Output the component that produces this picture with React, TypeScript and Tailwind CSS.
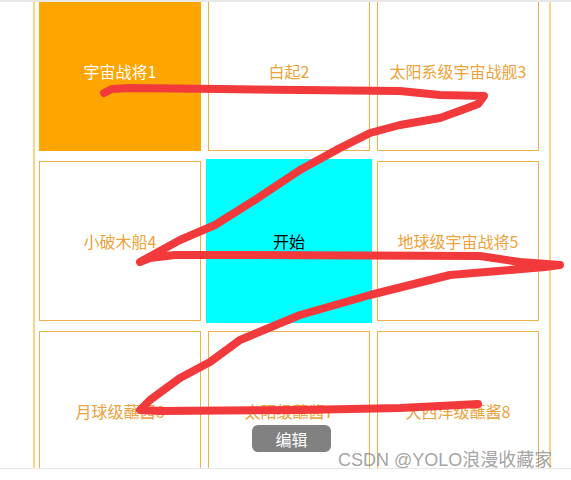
const cells = [
  { label: '宇宙战将1', kind: 'active' },
  { label: '白起2', kind: 'normal' },
  { label: '太阳系级宇宙战舰3', kind: 'normal' },
  { label: '小破木船4', kind: 'normal' },
  { label: '开始', kind: 'start' },
  { label: '地球级宇宙战将5', kind: 'normal' },
  { label: '月球级蘸酱6', kind: 'normal' },
  { label: '太阳级蘸酱7', kind: 'normal' },
  { label: '大西洋级蘸酱8', kind: 'normal' },
]

const stroke =
  '104,93 112,89 130,88 220,89 300,90 400,91 440,95 484,96 478,104 462,110 440,118 400,125 370,133 340,148 300,170 255,200 215,225 180,240 140,262 150,258 175,255 250,255 480,256 520,262 560,265 545,267 450,275 370,295 300,315 240,340 210,362 180,378 150,400 140,410 160,411 300,410 400,408 440,406 478,404'

function Cell({ label, kind }: { label: string; kind: string }) {
  if (kind === 'active') {
    return <div className="h-[160px] flex items-center justify-center bg-[#ffa500] text-white">{label}</div>
  }
  if (kind === 'start') {
    return <div className="h-[164px] -m-[2px] flex items-center justify-center bg-[#00ffff] text-black">{label}</div>
  }
  return (
    <div className="h-[160px] flex items-center justify-center border border-[#eeb04a] text-[#eda23a]">{label}</div>
  )
}

export default function App() {
  return (
    <div
      className="relative w-[571px] h-[480px] overflow-hidden bg-white text-[16px]"
      style={{ fontFamily: '"Microsoft YaHei", "Noto Sans CJK SC", sans-serif' }}
    >
      <div className="h-[469px] border-t-2 border-b border-[#e8e8e8] overflow-hidden">
        <div className="ml-[33px] w-[518px] h-full border-x-2 border-[#fcd38a] overflow-hidden">
          <div className="-mt-[11px] pl-[4px] grid grid-cols-[162px_162px_162px] gap-x-[7px] gap-y-[10px]">
            {cells.map((c) => (
              <Cell key={c.label} label={c.label} kind={c.kind} />
            ))}
          </div>
        </div>
      </div>

      <svg className="absolute inset-0 pointer-events-none" width="571" height="480">
        <polyline points={stroke} fill="none" stroke="#f23a3c" strokeWidth="8" strokeLinecap="round" strokeLinejoin="round" />
      </svg>

      <div className="absolute left-[252px] top-[425px] w-[79px] h-[27px] rounded-md bg-[#818181] text-white text-[16px] flex items-center justify-center">
        编辑
      </div>

      <div
        className="absolute left-[338px] top-[451px] text-[18px] text-[#8c8c8c]/80 leading-none whitespace-nowrap"
        style={{ fontFamily: '"Liberation Sans", "Noto Sans CJK SC", sans-serif' }}
      >
        CSDN @YOLO浪漫收藏家
      </div>
    </div>
  )
}
